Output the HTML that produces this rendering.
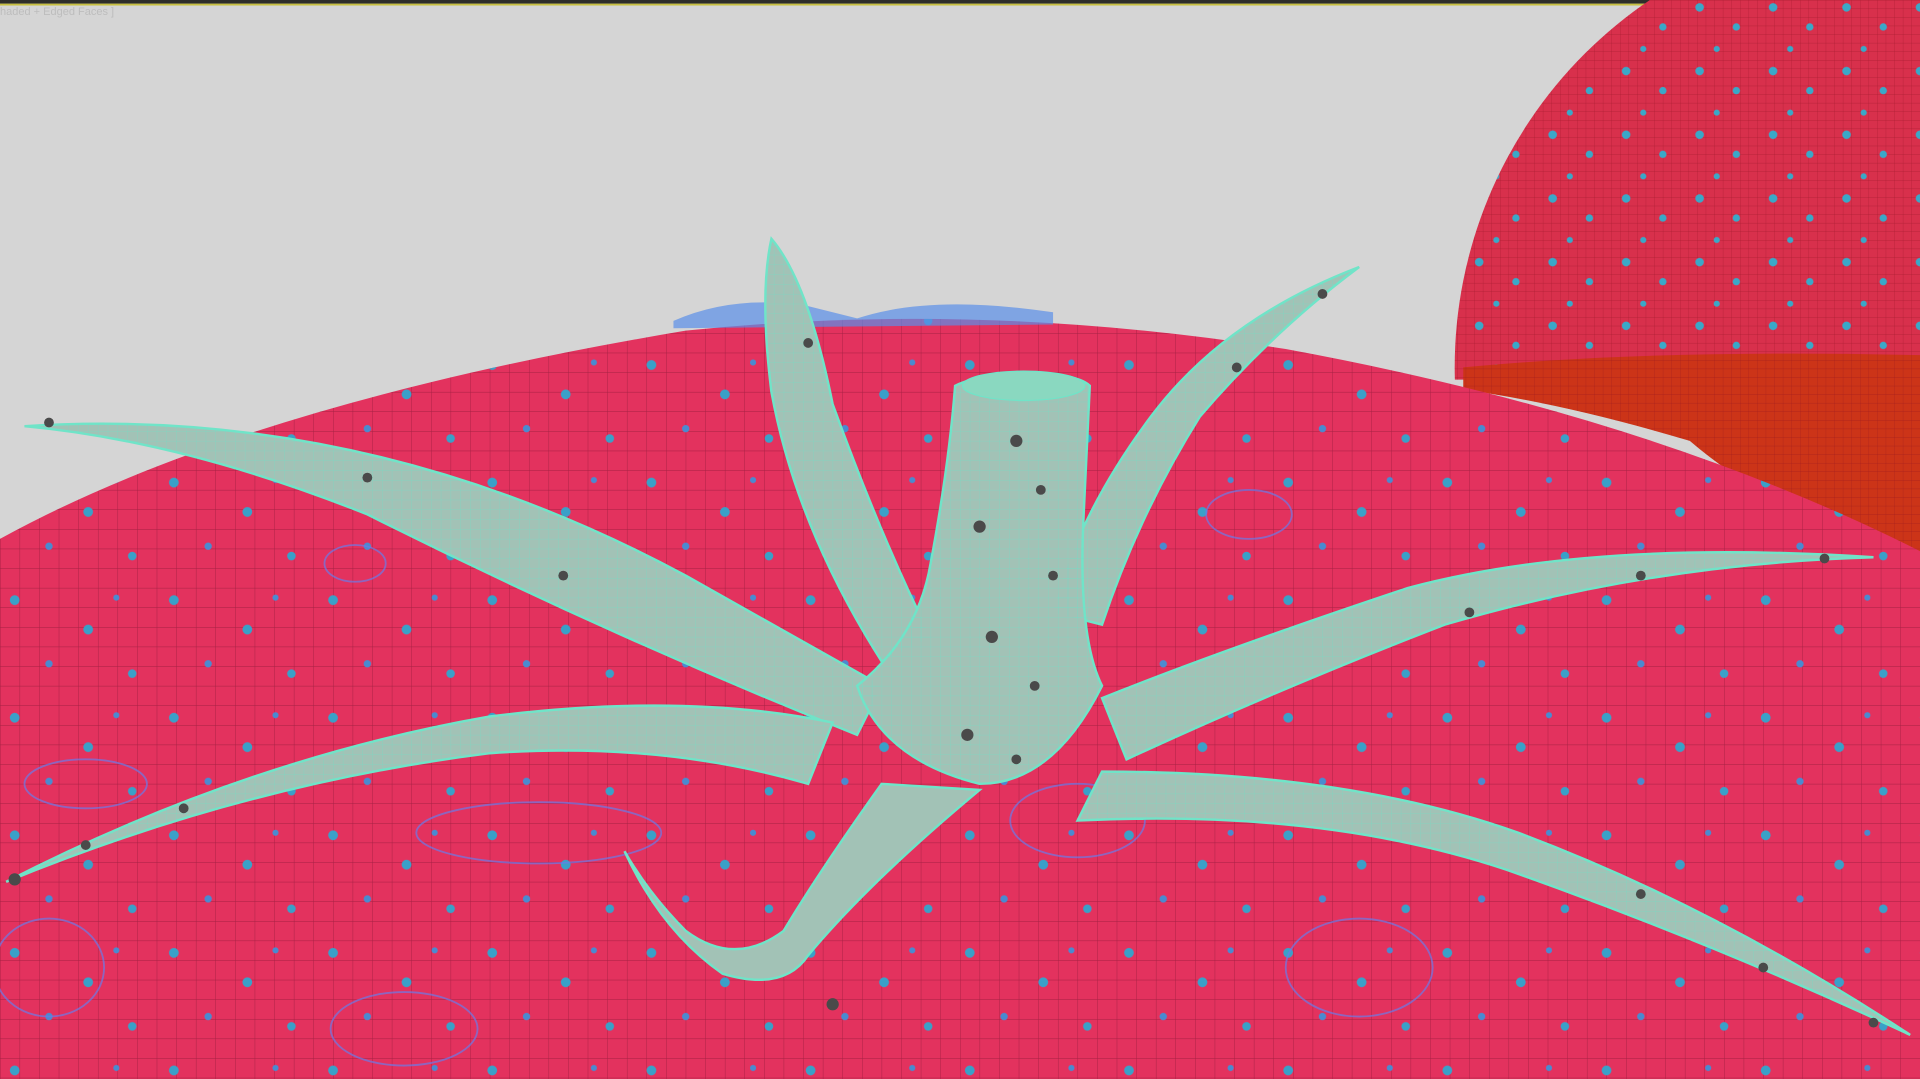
<!DOCTYPE html>
<html><head><meta charset="utf-8"><style>
html,body{margin:0;padding:0;background:#d5d5d5;overflow:hidden}
svg{display:block}
.lbl{position:absolute;left:0;top:6px;font:11px "Liberation Sans",sans-serif;color:#bdbdbd}
</style></head><body>
<div class="lbl">haded + Edged Faces ]</div>
<svg width="1920" height="1079" viewBox="0 0 1568 881" preserveAspectRatio="none" xmlns="http://www.w3.org/2000/svg">
<defs>
<pattern id="grid" width="16" height="16" patternUnits="userSpaceOnUse">
<path d="M0 0H16M0 0V16" stroke="#7a1430" stroke-width="0.7" opacity="0.6"/>
</pattern>
<pattern id="grid2" width="7" height="7" patternUnits="userSpaceOnUse">
<path d="M0 0H7M0 0V7" stroke="#8a1020" stroke-width="0.5" opacity="0.6"/>
</pattern>
<pattern id="dots" width="130" height="96" patternUnits="userSpaceOnUse">
<circle cx="12" cy="10" r="4" fill="#3aa0c8"/>
<circle cx="72" cy="34" r="4" fill="#3aa0c8"/>
<circle cx="108" cy="70" r="3.5" fill="#3aa0c8"/>
<circle cx="40" cy="62" r="3" fill="#4a8ad0"/>
<circle cx="95" cy="8" r="2.5" fill="#4a8ad0"/>
</pattern>
<pattern id="sdots" width="60" height="52" patternUnits="userSpaceOnUse">
<circle cx="8" cy="6" r="3.5" fill="#3aa8c8"/>
<circle cx="38" cy="22" r="3" fill="#3aa8c8"/>
<circle cx="22" cy="40" r="2.5" fill="#3aa8c8"/>
</pattern>
<pattern id="gg" width="8" height="8" patternUnits="userSpaceOnUse">
<path d="M0 0H8M0 0V8" stroke="#6ee0c8" stroke-width="0.6" opacity="0.7"/>
</pattern>
<clipPath id="sc"><rect x="0" y="0" width="1568" height="310"/></clipPath>
</defs>
<rect width="1568" height="881" fill="#d5d5d5"/>
<rect width="1568" height="3" fill="#2e2e2a"/>
<rect y="3" width="1568" height="1.5" fill="#c8c040"/>
<!-- top right sphere -->
<g clip-path="url(#sc)">
<circle cx="1550" cy="300" r="362" fill="#d8304c"/>
<circle cx="1550" cy="300" r="362" fill="url(#grid2)"/>
<circle cx="1550" cy="300" r="362" fill="url(#sdots)"/>
</g>
<path d="M1195 300 Q1350 285 1568 290 L1568 460 Q1450 420 1380 360 Q1280 330 1195 318Z" fill="#cc3418"/>
<path d="M1195 300 Q1350 285 1568 290 L1568 460 Q1450 420 1380 360 Q1280 330 1195 318Z" fill="url(#grid2)"/>
<!-- main tomato -->
<path d="M0 440 Q200 330 560 270 Q800 245 1050 285 Q1350 340 1568 450 L1568 881 L0 881Z" fill="#e3325e"/>
<path d="M0 440 Q200 330 560 270 Q800 245 1050 285 Q1350 340 1568 450 L1568 881 L0 881Z" fill="url(#grid)"/>
<path d="M0 440 Q200 330 560 270 Q800 245 1050 285 Q1350 340 1568 450 L1568 881 L0 881Z" fill="url(#dots)"/>
<path d="M550 262 Q600 240 660 250 L700 260 Q760 240 860 255 L860 265 L550 268Z" fill="#5a8ee8" opacity="0.7"/>
<g fill="none" stroke="#6a7ae8" stroke-width="1.5" opacity="0.7">
<ellipse cx="70" cy="640" rx="50" ry="20"/><ellipse cx="440" cy="680" rx="100" ry="25"/>
<ellipse cx="40" cy="790" rx="45" ry="40"/><ellipse cx="330" cy="840" rx="60" ry="30"/>
<ellipse cx="1110" cy="790" rx="60" ry="40"/><ellipse cx="880" cy="670" rx="55" ry="30"/>
<ellipse cx="290" cy="460" rx="25" ry="15"/><ellipse cx="1020" cy="420" rx="35" ry="20"/>
</g>
<!-- calyx sepals -->
<g fill="#a2c2b6" stroke="#70e4c8" stroke-width="2">
<path d="M20 348 Q300 330 560 470 L720 560 L700 600 Q500 520 300 420 Q150 360 20 348Z"/>
<path d="M630 195 Q660 230 680 330 Q720 440 760 520 L720 540 Q650 430 630 320 Q620 240 630 195Z"/>
<path d="M1110 218 Q1000 260 940 340 Q880 420 860 500 L900 510 Q930 420 980 340 Q1040 270 1110 218Z"/>
<path d="M1530 455 Q1300 440 1150 480 Q1000 530 900 570 L920 620 Q1050 560 1180 510 Q1350 460 1530 455Z"/>
<path d="M5 720 Q200 620 400 585 Q560 565 680 590 L660 640 Q540 605 400 615 Q200 640 5 720Z"/>
<path d="M1560 845 Q1400 740 1240 680 Q1100 630 900 630 L880 670 Q1080 660 1230 710 Q1400 770 1560 845Z"/>
<path d="M510 695 Q540 760 590 795 Q640 810 660 780 Q710 720 800 645 L720 640 Q670 710 640 760 Q600 790 560 760 Q530 730 510 695Z"/>
<path d="M780 315 Q800 305 840 305 Q880 305 890 315 L885 420 Q880 520 900 560 Q860 640 800 640 Q720 620 700 560 Q750 520 760 460 Q775 380 780 315Z"/>
</g>
<g fill="url(#gg)">
<path d="M20 348 Q300 330 560 470 L720 560 L700 600 Q500 520 300 420 Q150 360 20 348Z"/>
<path d="M630 195 Q660 230 680 330 Q720 440 760 520 L720 540 Q650 430 630 320 Q620 240 630 195Z"/>
<path d="M1110 218 Q1000 260 940 340 Q880 420 860 500 L900 510 Q930 420 980 340 Q1040 270 1110 218Z"/>
<path d="M1530 455 Q1300 440 1150 480 Q1000 530 900 570 L920 620 Q1050 560 1180 510 Q1350 460 1530 455Z"/>
<path d="M5 720 Q200 620 400 585 Q560 565 680 590 L660 640 Q540 605 400 615 Q200 640 5 720Z"/>
<path d="M1560 845 Q1400 740 1240 680 Q1100 630 900 630 L880 670 Q1080 660 1230 710 Q1400 770 1560 845Z"/>
<path d="M780 315 Q800 305 840 305 Q880 305 890 315 L885 420 Q880 520 900 560 Q860 640 800 640 Q720 620 700 560 Q750 520 760 460 Q775 380 780 315Z"/>
</g>
<ellipse cx="836" cy="315" rx="50" ry="12" fill="#8ad8c0" stroke="#70e4c8"/>
<g fill="#4a4a4a">
<circle cx="830" cy="360" r="5"/><circle cx="850" cy="400" r="4"/><circle cx="800" cy="430" r="5"/><circle cx="860" cy="470" r="4"/>
<circle cx="810" cy="520" r="5"/><circle cx="845" cy="560" r="4"/><circle cx="790" cy="600" r="5"/><circle cx="830" cy="620" r="4"/>
<circle cx="300" cy="390" r="4"/><circle cx="460" cy="470" r="4"/><circle cx="150" cy="660" r="4"/><circle cx="70" cy="690" r="4"/>
<circle cx="1200" cy="500" r="4"/><circle cx="1340" cy="470" r="4"/><circle cx="1340" cy="730" r="4"/><circle cx="1440" cy="790" r="4"/>
<circle cx="660" cy="280" r="4"/><circle cx="1080" cy="240" r="4"/><circle cx="1010" cy="300" r="4"/><circle cx="680" cy="820" r="5"/>
<circle cx="40" cy="345" r="4"/><circle cx="12" cy="718" r="5"/><circle cx="1490" cy="456" r="4"/><circle cx="1530" cy="835" r="4"/>
</g>
</svg>
</body></html>
